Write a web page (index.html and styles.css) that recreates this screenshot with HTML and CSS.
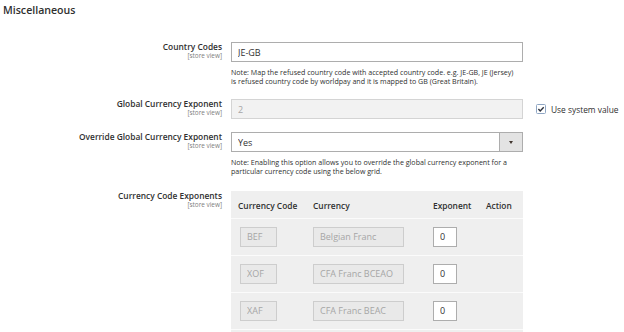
FILE: index.html
```html
<!DOCTYPE html>
<html lang="en">
<head>
    <meta charset="UTF-8">
    <meta name="viewport" content="width=device-width, initial-scale=1.0">
    <title>Miscellaneous</title>
    <link rel="stylesheet" href="styles.css">
</head>
<body>
    <h2 class="section-title">Miscellaneous</h2>

    <div class="fieldset">
        <div class="field">
            <div class="label">
                <span class="name">Country Codes</span>
                <span class="scope">[store view]</span>
            </div>
            <div class="control">
                <input type="text" class="input-text" value="JE-GB">
                <p class="note">Note: Map the refused country code with accepted country code. e.g. JE-GB, JE (Jersey)<br>is refused country code by worldpay and it is mapped to GB (Great Britain).</p>
            </div>
            <div class="extra"></div>
        </div>

        <div class="field">
            <div class="label">
                <span class="name">Global Currency Exponent</span>
                <span class="scope">[store view]</span>
            </div>
            <div class="control">
                <input type="text" class="input-text" value="2" disabled>
            </div>
            <div class="extra">
                <label class="use-default">
                    <svg class="checkbox" width="10" height="10" viewBox="0 0 10 10">
                        <rect x="0.5" y="0.5" width="9" height="9" rx="1" fill="#fff" stroke="#8fa6c4"/>
                        <path d="M2.4 5.1 L4.2 6.9 L7.7 3.2" fill="none" stroke="#2b2f3a" stroke-width="1.4"/>
                    </svg>
                    Use system value
                </label>
            </div>
        </div>

        <div class="field">
            <div class="label">
                <span class="name">Override Global Currency Exponent</span>
                <span class="scope">[store view]</span>
            </div>
            <div class="control">
                <div class="select-wrap">
                    <select class="select">
                        <option>Yes</option>
                        <option>No</option>
                    </select>
                    <span class="select-arrow"></span>
                </div>
                <p class="note">Note: Enabling this option allows you to override the global currency exponent for a particular currency code using the below grid.</p>
            </div>
            <div class="extra"></div>
        </div>

        <div class="field field-table">
            <div class="label">
                <span class="name">Currency Code Exponents</span>
                <span class="scope">[store view]</span>
            </div>
            <div class="control">
                <table class="control-table">
                    <colgroup>
                        <col class="col-code">
                        <col class="col-currency">
                        <col class="col-exponent">
                        <col class="col-action">
                    </colgroup>
                    <thead>
                        <tr>
                            <th>Currency Code</th>
                            <th>Currency</th>
                            <th>Exponent</th>
                            <th>Action</th>
                        </tr>
                    </thead>
                    <tbody>
                        <tr>
                            <td class="cell-code"><input type="text" class="input-code" value="BEF" disabled></td>
                            <td><input type="text" class="input-currency" value="Belgian Franc" disabled></td>
                            <td><input type="text" class="input-exponent" value="0"></td>
                            <td></td>
                        </tr>
                        <tr>
                            <td class="cell-code"><input type="text" class="input-code" value="XOF" disabled></td>
                            <td><input type="text" class="input-currency" value="CFA Franc BCEAO" disabled></td>
                            <td><input type="text" class="input-exponent" value="0"></td>
                            <td></td>
                        </tr>
                        <tr>
                            <td class="cell-code"><input type="text" class="input-code" value="XAF" disabled></td>
                            <td><input type="text" class="input-currency" value="CFA Franc BEAC" disabled></td>
                            <td><input type="text" class="input-exponent" value="0"></td>
                            <td></td>
                        </tr>
                        <tr>
                            <td class="cell-code"><input type="text" class="input-code" value="XPF" disabled></td>
                            <td><input type="text" class="input-currency" value="CFP Franc" disabled></td>
                            <td><input type="text" class="input-exponent" value="0"></td>
                            <td></td>
                        </tr>
                    </tbody>
                </table>
            </div>
            <div class="extra"></div>
        </div>
    </div>
</body>
</html>
```

FILE: styles.css
```css
body {
    margin: 0;
    font-family: "Open Sans", "Liberation Sans", sans-serif;
    color: #303030;
    background-color: white;
}

.section-title {
    margin: 0;
    padding: 3px 0 0 3px;
    font-size: 10.6px;
    line-height: 14px;
    font-weight: 600;
}

.fieldset {
    margin-top: 25px;
}

.field {
    display: grid;
    grid-template-columns: 222px 292px auto;
    column-gap: 9px;
    margin-bottom: 13px;
}

.field-table {
    margin-top: 15px;
}

.label {
    text-align: right;
}

.label .name {
    display: block;
    font-size: 8.4px;
    line-height: 9px;
    font-weight: 600;
}

.label .scope {
    display: block;
    margin-top: 1px;
    font-size: 6.4px;
    line-height: 7px;
    color: #7d7d7d;
}

.input-text,
.select {
    display: block;
    width: 100%;
    height: 20px;
    box-sizing: border-box;
    border: 1px solid #adadad;
    padding: 0 6px;
    font-family: inherit;
    font-size: 9px;
    color: #303030;
    background-color: white;
    margin: 0;
    border-radius: 0;
}

.input-text:disabled {
    background-color: #f2f2f2;
    border-color: #d4d4d4;
    color: #a6a6a6;
}

.note {
    margin: 6px 0 0;
    font-size: 7.1px;
    line-height: 9px;
    color: #303030;
}

.extra {
    padding-left: 4px;
}

.use-default {
    display: flex;
    align-items: center;
    gap: 5px;
    height: 20px;
    font-size: 8.4px;
    color: #303030;
}

.checkbox {
    display: block;
    flex-shrink: 0;
}

.select-wrap {
    position: relative;
}

.select {
    appearance: none;
    -webkit-appearance: none;
    padding-right: 30px;
}

.select-arrow {
    position: absolute;
    top: 1px;
    right: 1px;
    bottom: 1px;
    width: 22px;
    background-color: #e3e3e3;
    border-left: 1px solid #adadad;
    pointer-events: none;
}

.select-arrow::after {
    content: "";
    position: absolute;
    left: 9px;
    top: 8px;
    border-left: 2.5px solid transparent;
    border-right: 2.5px solid transparent;
    border-top: 3px solid #41362f;
}

.control-table {
    width: 292px;
    table-layout: fixed;
    border-collapse: collapse;
    background-color: #efefef;
}

.col-code { width: 75px; }
.col-currency { width: 120px; }
.col-exponent { width: 53px; }
.col-action { width: 44px; }

.control-table th {
    height: 27px;
    box-sizing: border-box;
    padding: 3px 0 0 7px;
    text-align: left;
    font-size: 8.4px;
    font-weight: 600;
    color: #303030;
    white-space: nowrap;
}

.control-table td {
    padding: 8px 0 8px 7px;
    border-top: 1px solid #fbfbfb;
}

.control-table td.cell-code {
    padding-left: 9px;
}

.control-table input {
    display: block;
    height: 20px;
    box-sizing: border-box;
    margin: 0;
    padding: 0 6px;
    border: 1px solid #adadad;
    border-radius: 0;
    font-family: inherit;
    font-size: 9px;
    color: #303030;
    background-color: white;
}

.control-table input:disabled {
    background-color: #e9e9e9;
    border-color: #cdcdcd;
    color: #a6a6a6;
}

.input-code { width: 37px; }
.input-currency { width: 91px; }
.input-exponent { width: 24px; padding-left: 7px; }
```
